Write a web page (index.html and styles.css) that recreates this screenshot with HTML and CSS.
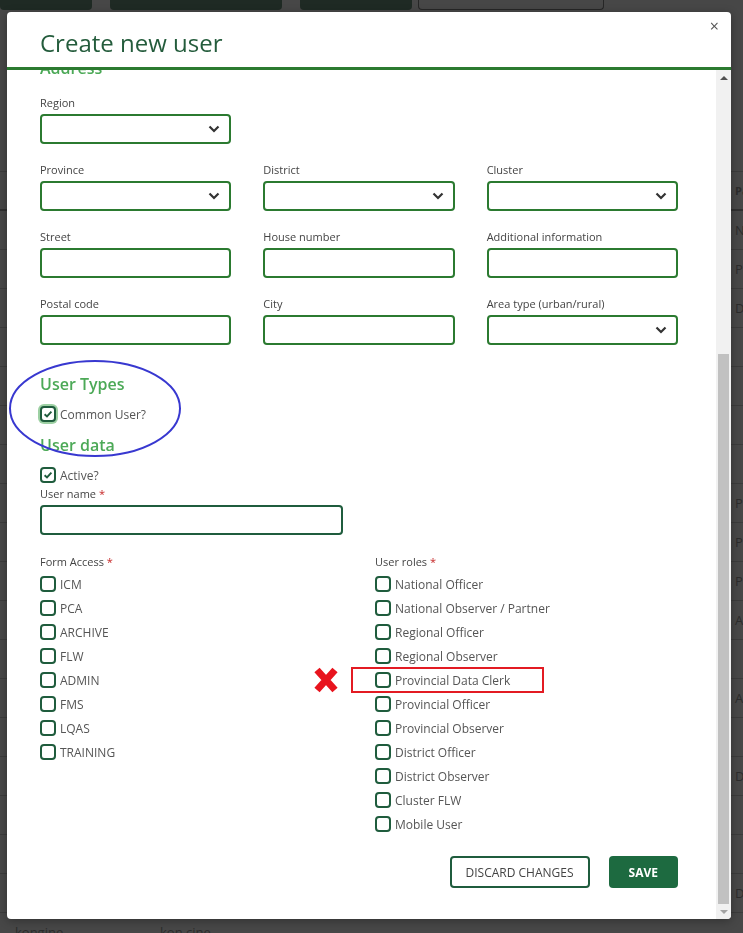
FILE: index.html
```html
<!DOCTYPE html>
<html lang="en">
<head>
    <meta charset="UTF-8">
    <meta name="viewport" content="width=device-width, initial-scale=1.0">
    <title>Users</title>
    <link rel="stylesheet" href="styles.css">
</head>
<body>
    <div class="page">
        <div class="toolbar">
            <span class="tb-btn tb-new"></span>
            <span class="tb-btn tb-sync"></span>
            <span class="tb-btn tb-export"></span>
            <span class="tb-btn tb-outline"></span>
        </div>
        <div class="filters"></div>
        <div class="user-table">
            <div class="row head"><span>Username</span><span>Name</span><span>Email</span><span>Region</span><span>Province</span><span>Pa</span></div>
            <div class="row"><span>nat_officer</span><span>natoff</span><span></span><span></span><span></span><span>N</span></div>
            <div class="row"><span>prov_kabul</span><span>kabul</span><span></span><span></span><span></span><span>P</span></div>
            <div class="row"><span>dist_01</span><span>dist01</span><span></span><span></span><span></span><span>D</span></div>
            <div class="row"><span></span><span></span><span></span><span></span><span></span><span></span></div>
            <div class="row"><span></span><span></span><span></span><span></span><span></span><span></span></div>
            <div class="row"><span></span><span></span><span></span><span></span><span></span><span></span></div>
            <div class="row"><span></span><span></span><span></span><span></span><span></span><span></span></div>
            <div class="row"><span>prov_herat</span><span>herat</span><span></span><span></span><span></span><span>P</span></div>
            <div class="row"><span>prov_balkh</span><span>balkh</span><span></span><span></span><span></span><span>P</span></div>
            <div class="row"><span>prov_kunar</span><span>kunar</span><span></span><span></span><span></span><span>P</span></div>
            <div class="row"><span>admin</span><span>admin</span><span></span><span></span><span></span><span>A</span></div>
            <div class="row"><span></span><span></span><span></span><span></span><span></span><span></span></div>
            <div class="row"><span>admin2</span><span>admin2</span><span></span><span></span><span></span><span>A</span></div>
            <div class="row"><span></span><span></span><span></span><span></span><span></span><span></span></div>
            <div class="row"><span>dist_02</span><span>dist02</span><span></span><span></span><span></span><span>D</span></div>
            <div class="row"><span></span><span></span><span></span><span></span><span></span><span></span></div>
            <div class="row"><span></span><span></span><span></span><span></span><span></span><span></span></div>
            <div class="row"><span>dist_03</span><span>dist03</span><span></span><span></span><span></span><span>D</span></div>
            <div class="row"><span>kongine</span><span>kon cine</span><span></span><span></span><span></span><span></span></div>
        </div>
    </div>

    <div class="modal">
        <div class="modal-header">
            <h2 class="modal-title">Create new user</h2>
            <span class="modal-close">&times;</span>
        </div>
        <div class="modal-main">
            <div class="modal-body">
                <section class="form-section">
                    <h3 class="section-title">Person data</h3>
                    <div class="grid-3">
                        <div class="field"><label>First name <span class="req">*</span></label><input type="text"></div>
                        <div class="field"><label>Last name <span class="req">*</span></label><input type="text"></div>
                        <div class="field"><label>Email address</label><input type="text"></div>
                        <div class="field"><label>Phone number</label><input type="text"></div>
                        <div class="field"><label>Language</label><input type="text"></div>
                        <div class="field"><label>Organisation</label><input type="text"></div>
                        <div class="field"><label>Position</label><input type="text"></div>
                        <div class="field"><label>Department</label><input type="text"></div>
                        <div class="field"><label>Health facility</label><input type="text"></div>
                        <div class="field"><label>Supervisor</label><input type="text"></div>
                        <div class="field"><label>Laboratory</label><input type="text"></div>
                        <div class="field"><label>Point of entry</label><input type="text"></div>
                        <div class="field"><label>Password</label><input type="password"></div>
                        <div class="field"><label>Confirm password</label><input type="password"></div>
                    </div>
                </section>

                <section class="form-section">
                    <h3 class="section-title">Address</h3>
                    <div class="grid-3">
                        <div class="field">
                            <label>Region</label>
                            <div class="select"><select></select><svg viewBox="0 0 12 8"><path d="M1.5 1.5 6 6 10.5 1.5"/></svg></div>
                        </div>
                        <div class="field new-row">
                            <label>Province</label>
                            <div class="select"><select></select><svg viewBox="0 0 12 8"><path d="M1.5 1.5 6 6 10.5 1.5"/></svg></div>
                        </div>
                        <div class="field">
                            <label>District</label>
                            <div class="select"><select></select><svg viewBox="0 0 12 8"><path d="M1.5 1.5 6 6 10.5 1.5"/></svg></div>
                        </div>
                        <div class="field">
                            <label>Cluster</label>
                            <div class="select"><select></select><svg viewBox="0 0 12 8"><path d="M1.5 1.5 6 6 10.5 1.5"/></svg></div>
                        </div>
                        <div class="field"><label>Street</label><input type="text"></div>
                        <div class="field"><label>House number</label><input type="text"></div>
                        <div class="field"><label>Additional information</label><input type="text"></div>
                        <div class="field"><label>Postal code</label><input type="text"></div>
                        <div class="field"><label>City</label><input type="text"></div>
                        <div class="field">
                            <label>Area type (urban/rural)</label>
                            <div class="select"><select></select><svg viewBox="0 0 12 8"><path d="M1.5 1.5 6 6 10.5 1.5"/></svg></div>
                        </div>
                    </div>
                </section>

                <section class="form-section user-types">
                    <svg class="mark-ellipse" viewBox="0 0 174 99"><ellipse cx="87" cy="49.5" rx="85" ry="47.5"/></svg>
                    <h3 class="section-title">User Types</h3>
                    <label class="check single focused"><span class="box"><svg viewBox="0 0 12 12"><path d="M2.6 6.2 5 8.5 9.4 3.6"/></svg></span>Common User?</label>
                </section>

                <section class="form-section user-data">
                    <h3 class="section-title">User data</h3>
                    <label class="check single"><span class="box"><svg viewBox="0 0 12 12"><path d="M2.6 6.2 5 8.5 9.4 3.6"/></svg></span>Active?</label>
                    <div class="grid-2">
                        <div class="field"><label>User name <span class="req">*</span></label><input type="text" class="dark"></div>
                    </div>
                    <div class="grid-2 groups">
                        <div class="check-group">
                            <div class="group-label">Form Access <span class="req">*</span></div>
                            <label class="check"><span class="box"></span>ICM</label>
                            <label class="check"><span class="box"></span>PCA</label>
                            <label class="check"><span class="box"></span>ARCHIVE</label>
                            <label class="check"><span class="box"></span>FLW</label>
                            <label class="check"><span class="box"></span>ADMIN</label>
                            <label class="check"><span class="box"></span>FMS</label>
                            <label class="check"><span class="box"></span>LQAS</label>
                            <label class="check"><span class="box"></span>TRAINING</label>
                        </div>
                        <div class="check-group">
                            <div class="group-label">User roles <span class="req">*</span></div>
                            <label class="check"><span class="box"></span>National Officer</label>
                            <label class="check"><span class="box"></span>National Observer / Partner</label>
                            <label class="check"><span class="box"></span>Regional Officer</label>
                            <label class="check"><span class="box"></span>Regional Observer</label>
                            <label class="check flagged">
                                <svg class="mark-x" viewBox="0 0 26 28"><path d="M4 4 22 24M22 4 4 24"/></svg>
                                <span class="mark-box"></span>
                                <span class="box"></span>Provincial Data Clerk
                            </label>
                            <label class="check"><span class="box"></span>Provincial Officer</label>
                            <label class="check"><span class="box"></span>Provincial Observer</label>
                            <label class="check"><span class="box"></span>District Officer</label>
                            <label class="check"><span class="box"></span>District Observer</label>
                            <label class="check"><span class="box"></span>Cluster FLW</label>
                            <label class="check"><span class="box"></span>Mobile User</label>
                        </div>
                    </div>
                </section>

                <div class="actions">
                    <button class="btn btn-outline">Discard changes</button>
                    <button class="btn btn-primary">Save</button>
                </div>
            </div>
            <div class="scrollbar">
                <span class="sb-btn"><span class="arrow-up"></span></span>
                <div class="sb-track"><div class="sb-thumb"></div></div>
                <span class="sb-btn"><span class="arrow-down"></span></span>
            </div>
        </div>
    </div>

    <script src="script.js"></script>
</body>
</html>
```

FILE: styles.css
```css
body {
    margin: 0;
    font-family: "Open Sans", "Noto Sans", sans-serif;
    background-color: #474747;
    overflow: hidden;
}

/* page behind the dialog (already dimmed) */
.toolbar {
    height: 10px;
    display: flex;
    gap: 18px;
}
.tb-btn {
    height: 10px;
    background-color: #1f2a24;
    border-radius: 0 0 4px 4px;
}
.tb-new { width: 92px; }
.tb-sync { width: 172px; }
.tb-export { width: 112px; }
.tb-outline {
    width: 184px;
    margin-left: -12px;
    background-color: #474747;
    border: 1px solid #262626;
    border-top: none;
    height: 9px;
}
.filters {
    height: 161px;
    border-bottom: 1px solid #3b3b3b;
}
.user-table .row {
    display: grid;
    grid-template-columns: 145px 145px 145px 145px 140px 1fr;
    padding-left: 15px;
    height: 38px;
    align-items: center;
    border-bottom: 1px solid #3b3b3b;
    font-size: 13px;
    color: #2c2c2c;
    white-space: nowrap;
    overflow: hidden;
}
.user-table .row.head {
    font-size: 11px;
    font-weight: 700;
    border-bottom: 2px solid #303030;
    height: 37px;
}

/* dialog */
.modal {
    position: fixed;
    top: 12px;
    left: 7px;
    width: 724px;
    height: 907px;
    background-color: #fff;
    border-radius: 4px;
    display: flex;
    flex-direction: column;
    overflow: hidden;
    box-shadow: 0 2px 10px rgba(0, 0, 0, 0.3);
}
.modal-header {
    position: relative;
    padding: 15px 33px 8px;
    border-bottom: 3px solid #2b7a30;
}
.modal-title {
    margin: 0;
    font-size: 24px;
    line-height: 32px;
    font-weight: 400;
    color: #245c3c;
}
.modal-close {
    position: absolute;
    top: 3px;
    right: 12px;
    font-size: 16px;
    color: #555;
}
.modal-main {
    flex: 1;
    display: flex;
    min-height: 0;
}
.modal-body {
    flex: 1;
    overflow: hidden;
    padding: 20px 38px 31px 33px;
}

/* scrollbar of the dialog body */
.scrollbar {
    width: 15px;
    display: flex;
    flex-direction: column;
    background-color: #f1f1f1;
}
.sb-btn {
    height: 15px;
    display: flex;
    align-items: center;
    justify-content: center;
}
.arrow-up {
    border-left: 4px solid transparent;
    border-right: 4px solid transparent;
    border-bottom: 4px solid #505050;
}
.arrow-down {
    border-left: 4px solid transparent;
    border-right: 4px solid transparent;
    border-top: 4px solid #a3a3a3;
}
.sb-track {
    flex: 1;
}
.sb-thumb {
    margin: 0 2px;
    background-color: #c1c1c1;
}

.form-section {
    margin-top: 28px;
}
.form-section:first-child {
    margin-top: 0;
}
.section-title {
    margin: 0 0 15px;
    font-size: 16px;
    line-height: 22px;
    font-weight: 600;
    color: #4ca957;
}

.grid-3 {
    display: grid;
    grid-template-columns: repeat(3, 1fr);
    column-gap: 32px;
    row-gap: 17px;
}
.grid-2 {
    display: grid;
    grid-template-columns: repeat(2, 1fr);
    column-gap: 32px;
}
.field.new-row {
    grid-column-start: 1;
}
.field label, .group-label {
    display: block;
    font-size: 11px;
    line-height: 18px;
    color: #444;
    margin-bottom: 2px;
}
.req {
    color: #c62828;
}
.field input, .select select {
    display: block;
    width: 100%;
    height: 30px;
    box-sizing: border-box;
    border: 2px solid #2b7a30;
    border-radius: 4px;
    background-color: #fff;
    font-family: inherit;
    font-size: 12px;
    padding: 0 8px;
    outline: none;
}
.field input.dark {
    border-color: #1f5c3d;
}
.select {
    position: relative;
}
.select select {
    appearance: none;
}
.select svg {
    position: absolute;
    right: 11px;
    top: 11px;
    width: 12px;
    height: 8px;
    fill: none;
    stroke: #333;
    stroke-width: 2.2;
}

/* checkboxes */
.check {
    display: flex;
    align-items: center;
    gap: 4px;
    height: 24px;
    font-size: 12px;
    color: #555;
}
.check.single {
    height: 20px;
}
.box {
    width: 16px;
    height: 16px;
    box-sizing: border-box;
    border: 2px solid #1f5c3d;
    border-radius: 4px;
    background-color: #fff;
    display: flex;
    align-items: center;
    justify-content: center;
    flex-shrink: 0;
}
.box svg {
    width: 12px;
    height: 12px;
    fill: none;
    stroke: #1f5c3d;
    stroke-width: 1.9;
}
.check.focused .box {
    box-shadow: 0 0 0 2px rgba(76, 169, 87, 0.55);
}

.user-types {
    position: relative;
}
.user-types .section-title, .user-data .section-title {
    margin-bottom: 9px;
}
.user-data {
    margin-top: 10px;
}
.groups {
    margin-top: 18px;
}
.check-group .group-label {
    margin-bottom: 1px;
}

/* review annotations drawn on the screenshot */
.mark-ellipse {
    position: absolute;
    left: -32px;
    top: -14px;
    width: 174px;
    height: 99px;
    fill: none;
    stroke: #3838d0;
    stroke-width: 2;
}
.flagged {
    position: relative;
}
.mark-box {
    position: absolute;
    left: -24px;
    top: -1px;
    width: 193px;
    height: 26px;
    box-sizing: border-box;
    border: 2px solid #e31b23;
}
.mark-x {
    position: absolute;
    left: -62px;
    top: -2px;
    width: 26px;
    height: 28px;
    stroke: #e8141e;
    stroke-width: 7;
}

.actions {
    display: flex;
    justify-content: flex-end;
    gap: 19px;
    margin-top: 20px;
}
.btn {
    height: 32px;
    border-radius: 4px;
    font-family: inherit;
    font-size: 12px;
    text-transform: uppercase;
    cursor: pointer;
}
.btn-outline {
    padding: 0 14px;
    background-color: #fff;
    border: 2px solid #1f5c3d;
    color: #444;
}
.btn-primary {
    padding: 0 20px;
    background-color: #1d6a40;
    border: none;
    color: #fff;
    font-weight: 700;
}
```

FILE: script.js
```js
// dialog is shown scrolled down to the address part
var body = document.querySelector('.modal-body');
body.scrollTop = body.scrollHeight;

// draw the scroll thumb for the current position
var track = document.querySelector('.sb-track');
var thumb = document.querySelector('.sb-thumb');
var ratio = track.clientHeight / body.scrollHeight;
thumb.style.height = Math.round(body.clientHeight * ratio) + 'px';
thumb.style.marginTop = Math.round(body.scrollTop * ratio) + 'px';
```
